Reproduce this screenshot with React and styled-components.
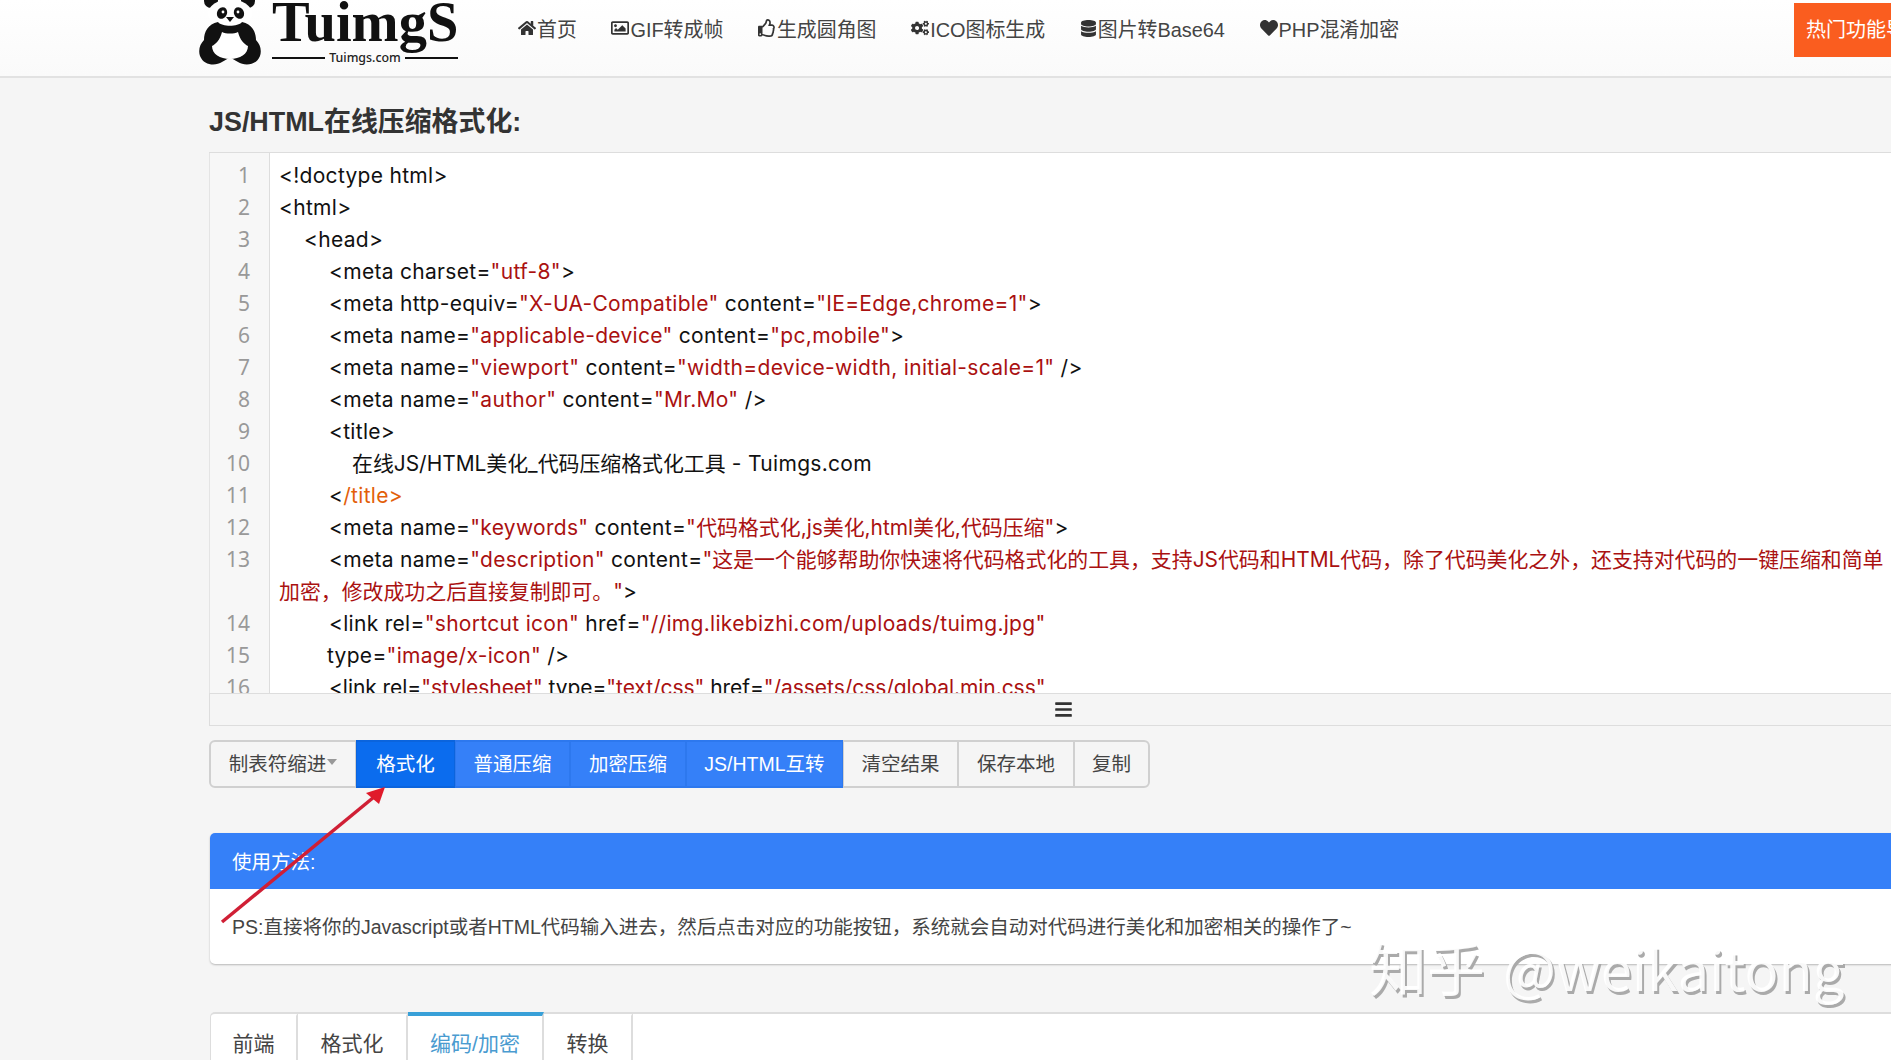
import React from "react";
import styled, { createGlobalStyle } from "styled-components";
import { FaHome, FaRegImage, FaRegThumbsUp, FaCogs, FaDatabase, FaHeart, FaBars } from "react-icons/fa";

const UI = `"Liberation Sans","Noto Sans CJK SC",sans-serif`;
const CODE = `Inter,"Noto Sans CJK SC",sans-serif`;

const Global = createGlobalStyle`
  html, body { margin: 0; padding: 0; width: 1891px; height: 1060px; overflow: hidden; background: #f5f5f5; }
  body { font-family: ${UI}; color: #444; }
  * { box-sizing: border-box; }
`;

const Page = styled.div`
  position: relative;
  width: 1891px;
  height: 1060px;
  overflow: hidden;
`;

const Header = styled.header`
  height: 78px;
  display: flex;
  align-items: flex-start;
  padding-left: 198px;
  background: linear-gradient(#ffffff, #fafafa);
  border-bottom: 2px solid #e2e2e2;
  overflow: hidden;
`;

const Logo = styled.div`
  display: flex;
  gap: 10px;
  width: 320px;
  flex: none;
`;

const LogoWords = styled.div`
  width: 186px;
  display: flex;
  flex-direction: column;
`;

const LogoName = styled.div`
  font: bold 56.5px/50px "Liberation Serif", serif;
  color: #111;
  margin-top: -3px;
  white-space: nowrap;
`;

const LogoSub = styled.div`
  display: flex;
  align-items: center;
  gap: 4px;
  margin-top: 3px;
  font: 500 12.4px/16px "Noto Sans", sans-serif;
  color: #222;
  &::before, &::after { content: ""; flex: 1; height: 2px; background: #111; }
`;

const Nav = styled.nav`
  display: flex;
  gap: 34.7px;
  height: 56px;
  align-items: center;
`;

const NavItem = styled.a`
  display: flex;
  align-items: center;
  font-size: 19.9px;
  color: #444;
  white-space: nowrap;
  svg { flex: none; color: #333; font-size: ${p => p.$icon || 18}px; margin-right: 1px; }
`;

const HotButton = styled.div`
  flex: none;
  margin-top: 3px;
  margin-left: auto;
  width: 97px;
  height: 54px;
  padding-left: 12px;
  background: #fa5d1f;
  color: #fff;
  font-size: 20px;
  line-height: 54px;
  white-space: nowrap;
  overflow: hidden;
`;

const Main = styled.main`
  padding-left: 209px;
  width: 1960px;
`;

const Title = styled.h1`
  margin: 0;
  height: 74px;
  font-size: 26.9px;
  line-height: 88px;
  font-weight: bold;
  color: #333;
`;

const Editor = styled.section`
  display: flex;
  height: 541px;
  overflow: hidden;
  background: #fff;
  border-top: 1px solid #ddd;
`;

const Gutter = styled.div`
  flex: none;
  width: 61px;
  padding: 6px 19px 0 0;
  background: #f7f7f7;
  border-left: 1px solid #e4e4e4;
  border-right: 1px solid #ddd;
  font: 21px/32px "Noto Sans", sans-serif;
  color: #999;
  text-align: right;
`;

const LineNo = styled.div`
  height: ${p => p.$rows * 32}px;
`;

const Code = styled.div`
  flex: 1;
  padding: 7px 0 0 9px;
  font: 21px/32px ${CODE};
  letter-spacing: 0.3px;
  color: #111;
`;

const CodeLine = styled.div`
  white-space: pre;
  text-indent: ${p => p.$indent}px;
  ${p => p.$tight && "letter-spacing: -0.05px;"}
`;

const Str = styled.span`color: #a11;`;
const Tag = styled.span`color: #e35f0a;`;
const Cjk = styled.span`
  letter-spacing: 0;
  font-size: 20.9px;
`;

const ResizeBar = styled.div`
  height: 33px;
  width: 1900px;
  display: flex;
  align-items: center;
  background: #f5f5f5;
  border: 1px solid #ddd;
  color: #333;
  font-size: 19px;
`;

const ResizeInner = styled.div`
  width: 1706px;
  display: flex;
  justify-content: center;
`;

const BtnGroup = styled.div`
  display: flex;
  margin-top: 14px;
  height: 48px;
`;

const Btn = styled.button`
  width: ${p => p.$w}px;
  height: 48px;
  padding: 0 0 4px;
  display: flex;
  align-items: center;
  justify-content: center;
  font: 19.5px ${UI};
  white-space: nowrap;
  cursor: pointer;
  color: ${p => (p.$tone === "plain" ? "#444" : "#fff")};
  background: ${p => (p.$tone === "active" ? "#0b6cee" : p.$tone === "blue" ? "#3580f8" : "#f5f5f5")};
  border: 2px solid ${p => (p.$tone === "active" ? "#0b64dd" : p.$tone === "blue" ? "#2d78ee" : "#d0d0d0")};
  border-width: 2px 1px 2px 1px;
  border-radius: ${p => (p.$first ? "6px 0 0 6px" : p.$last ? "0 6px 6px 0" : "0")};
  ${p => p.$first && "border-left-width: 2px;"}
  ${p => p.$last && "border-right-width: 2px;"}
`;

const Caret = styled.span`
  width: 0;
  height: 0;
  margin-left: 1px;
  border: 5px solid transparent;
  border-top: 6px solid #999;
  border-bottom: 0;
`;

const Panel = styled.section`
  margin: 45px 0 0 1px;
  width: 1720px;
  height: 131px;
  background: #fff;
  border-radius: 5px;
  box-shadow: 0 1px 2px rgba(0, 0, 0, 0.25);
  overflow: hidden;
`;

const PanelHead = styled.div`
  height: 56px;
  padding-left: 22px;
  background: #3580f8;
  color: #fff;
  font-size: 19.5px;
  line-height: 58px;
`;

const PanelBody = styled.div`
  padding: 22px 22px 0;
  font-size: 19.5px;
  line-height: 32px;
  color: #444;
`;

const TabBar = styled.nav`
  margin: 48px 0 0 1px;
  width: 1720px;
  height: 60px;
  display: flex;
  background: #fff;
  border-top: 2px solid #ddd;
  border-left: 1px solid #ddd;
  border-radius: 5px 0 0 0;
`;

const Tab = styled.a`
  width: ${p => p.$w}px;
  padding-top: 12px;
  margin-top: -2px;
  text-align: center;
  font-size: 21px;
  line-height: 32px;
  color: ${p => (p.$on ? "#4a9bd0" : "#444")};
  border-top: 4px solid ${p => (p.$on ? "#38a0d8" : "transparent")};
  border-right: 2px solid #ddd;
`;

const Arrow = styled.svg`
  position: absolute;
  left: 0;
  top: 0;
  pointer-events: none;
`;

const Watermark = styled.div`
  position: absolute;
  left: 1369px;
  top: 926px;
  font: 58px/80px "Noto Sans CJK SC", "Noto Sans", sans-serif;
  color: rgba(255, 255, 255, 0.92);
  text-shadow: 2px 3px 0 #aaa;
  white-space: nowrap;
`;

const WatermarkName = styled.span`
  font-size: 56px;
  margin-left: 18px;
`;

const Panda = () => (
  <svg width="64" height="66" viewBox="0 0 64 66" style={{ flex: "none" }} aria-label="panda">
    <circle cx="13" cy="1" r="7" fill="#111" />
    <circle cx="50" cy="1" r="7" fill="#111" />
    <ellipse cx="32" cy="14" rx="22" ry="15" fill="#fff" />
    <ellipse cx="24" cy="13" rx="5" ry="6" fill="#111" transform="rotate(25 24 13)" />
    <ellipse cx="41" cy="13" rx="5" ry="6" fill="#111" transform="rotate(-25 41 13)" />
    <circle cx="25" cy="12" r="1.4" fill="#fff" />
    <circle cx="40" cy="12" r="1.4" fill="#fff" />
    <path d="M28 17 h8 l-4 5z" fill="#111" />
    <path d="M20 22 C10 24 6 32 6 40 C2 44 0 50 2 56 C6 66 18 66 24 62 C28 60 30 58 32 58 C34 58 36 60 40 62 C46 66 58 66 62 56 C64 50 62 44 58 40 C58 32 54 24 44 22 C40 27 24 27 20 22Z" fill="#111" />
    <path d="M14 46 C18 44 22 40 24 32 C28 34 36 34 40 32 C42 40 46 44 50 46 C50 54 42 59 32 59 C22 59 14 54 14 46Z" fill="#fff" />
  </svg>
);

const navItems = [
  [FaHome, "首页", 18],
  [FaRegImage, "GIF转成帧", 18],
  [FaRegThumbsUp, "生成圆角图", 18],
  [FaCogs, "ICO图标生成", 18],
  [FaDatabase, "图片转Base64", 17],
  [FaHeart, "PHP混淆加密", 18],
];

const S = ({ children }) => <Str>{children}</Str>;

const code = [
  [1, 0, <>{"<!doctype html>"}</>],
  [1, 0, <>{"<html>"}</>],
  [1, 25, <>{"<head>"}</>],
  [1, 50, <>{"<meta charset="}<S>"utf-8"</S>{">"}</>],
  [1, 50, <>{"<meta http-equiv="}<S>"X-UA-Compatible"</S>{" content="}<S>"IE=Edge,chrome=1"</S>{">"}</>],
  [1, 50, <>{"<meta name="}<S>"applicable-device"</S>{" content="}<S>"pc,mobile"</S>{">"}</>],
  [1, 50, <>{"<meta name="}<S>"viewport"</S>{" content="}<S>"width=device-width, initial-scale=1"</S>{" />"}</>],
  [1, 50, <>{"<meta name="}<S>"author"</S>{" content="}<S>"Mr.Mo"</S>{" />"}</>],
  [1, 50, <>{"<title>"}</>],
  [1, 73, <><Cjk>{"在线JS/HTML美化_代码压缩格式化工具"}</Cjk>{" - Tuimgs.com"}</>],
  [1, 50, <>{"<"}<Tag>/title</Tag><Tag>{">"}</Tag></>],
  [1, 50, <>{"<meta name="}<S>"keywords"</S>{" content="}<S>{'"'}<Cjk>代码格式化,js美化,html美化,代码压缩</Cjk>{'"'}</S>{">"}</>],
  [2, 50, <>{"<meta name="}<S>"description"</S>{" content="}<S><Cjk>{"\"这是一个能够帮助你快速将代码格式化的工具，支持JS代码和HTML代码，除了代码美化之外，还支持对代码的一键压缩和简单\n加密，修改成功之后直接复制即可。\""}</Cjk></S>{">"}</>],
  [1, 50, <>{"<link rel="}<S>"shortcut icon"</S>{" href="}<S>"//img.likebizhi.com/uploads/tuimg.jpg"</S></>],
  [1, 48, <>{"type="}<S>"image/x-icon"</S>{" />"}</>],
  [1, 50, <>{"<link rel="}<S>"stylesheet"</S>{" type="}<S>"text/css"</S>{" href="}<S>"/assets/css/global.min.css"</S></>, true],
];

const buttons = [
  ["格式化", 99, "active"],
  ["普通压缩", 115, "blue"],
  ["加密压缩", 116, "blue"],
  ["JS/HTML互转", 157, "blue"],
  ["清空结果", 115, "plain"],
  ["保存本地", 116, "plain"],
];

const tabs = [["前端", 87], ["格式化", 110], ["编码/加密", 136, true], ["转换", 89]];

export default function App() {
  let no = 0;
  return (
    <Page>
      <Global />
      <Header>
        <Logo>
          <Panda />
          <LogoWords>
            <LogoName>TuimgS</LogoName>
            <LogoSub>Tuimgs.com</LogoSub>
          </LogoWords>
        </Logo>
        <Nav>
          {navItems.map(([Icon, label, size]) => (
            <NavItem key={label} $icon={size}><Icon />{label}</NavItem>
          ))}
        </Nav>
        <HotButton>热门功能导航</HotButton>
      </Header>
      <Main>
        <Title>JS/HTML在线压缩格式化:</Title>
        <Editor>
          <Gutter>
            {code.map(([rows]) => {
              no += 1;
              return <LineNo key={no} $rows={rows}>{no}</LineNo>;
            })}
          </Gutter>
          <Code>
            {code.map(([, indent, body, tight], i) => (
              <CodeLine key={i} $indent={indent} $tight={tight}>{body}</CodeLine>
            ))}
          </Code>
        </Editor>
        <ResizeBar>
          <ResizeInner><FaBars /></ResizeInner>
        </ResizeBar>
        <BtnGroup>
          <Btn $w={147} $tone="plain" $first>制表符缩进<Caret /></Btn>
          {buttons.map(([label, w, tone]) => (
            <Btn key={label} $w={w} $tone={tone}>{label}</Btn>
          ))}
          <Btn $w={76} $tone="plain" $last>复制</Btn>
        </BtnGroup>
        <Panel>
          <PanelHead>使用方法:</PanelHead>
          <PanelBody>PS:直接将你的Javascript或者HTML代码输入进去，然后点击对应的功能按钮，系统就会自动对代码进行美化和加密相关的操作了~</PanelBody>
        </Panel>
        <TabBar>
          {tabs.map(([label, w, on]) => (
            <Tab key={label} $w={w} $on={on}>{label}</Tab>
          ))}
        </TabBar>
      </Main>
      <Arrow width="1891" height="1060" viewBox="0 0 1891 1060">
        <line x1="222" y1="922" x2="374" y2="797" stroke="#d01f35" strokeWidth="3.5" />
        <path d="M385 787 L366 793 L379 804 Z" fill="#e01a2a" />
      </Arrow>
      <Watermark>知乎<WatermarkName>@weikaitong</WatermarkName></Watermark>
    </Page>
  );
}
